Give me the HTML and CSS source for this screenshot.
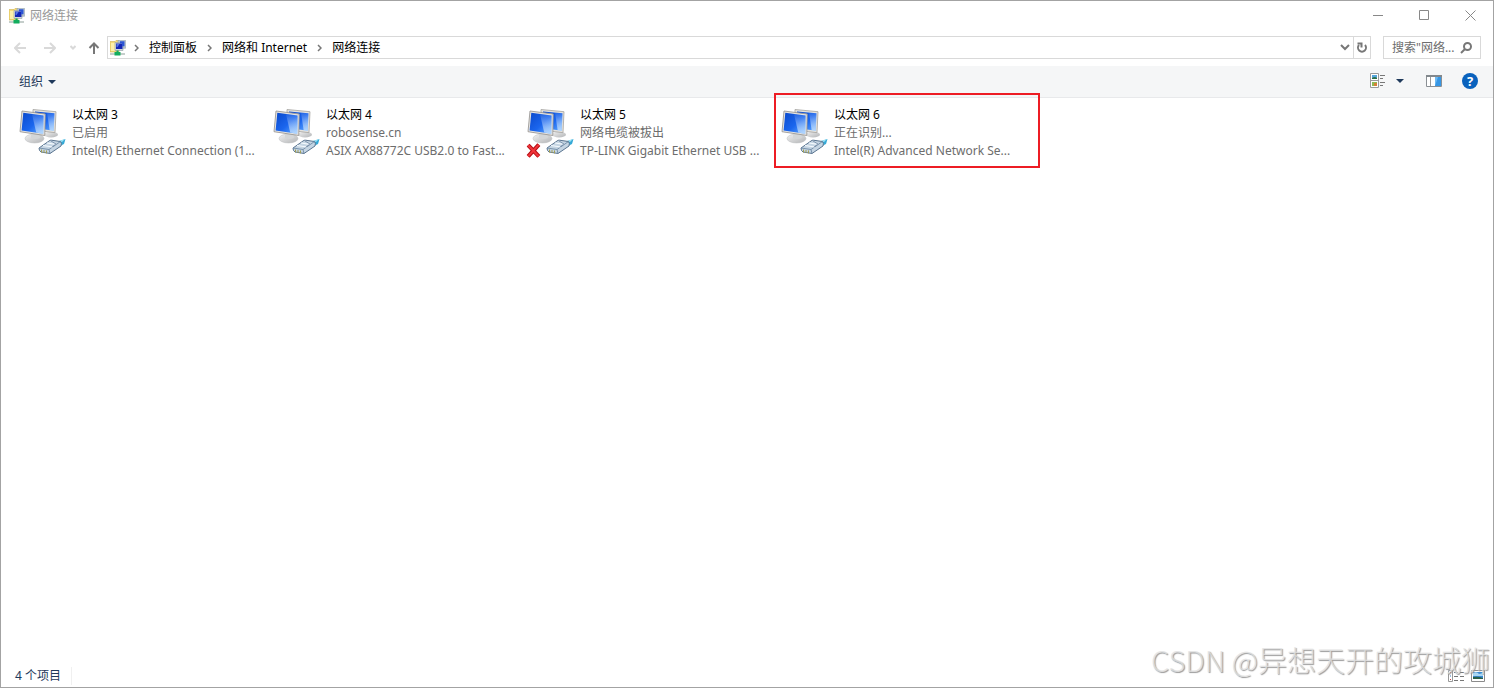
FILE: index.html
```html
<!DOCTYPE html>
<html lang="zh-CN">
  <head>
    <meta charset="UTF-8" />
    <meta name="viewport" content="width=device-width, initial-scale=1.0" />
    <title>网络连接</title>
    <link rel="stylesheet" href="styles.css">
  </head>
  <body>
    <!-- SHARED ICONS -->
    <svg class="sprite" width="0" height="0" aria-hidden="true">
      <defs>
        <linearGradient id="screen" x1="0" y1="0" x2="1" y2="1">
          <stop offset="0" stop-color="#0a49cc" />
          <stop offset="0.55" stop-color="#1b66ee" />
          <stop offset="1" stop-color="#68b0ff" />
        </linearGradient>
        <linearGradient id="shine" x1="0" y1="0" x2="0" y2="1">
          <stop offset="0" stop-color="#fff" stop-opacity="0.05" />
          <stop offset="1" stop-color="#d5ebff" stop-opacity="0.7" />
        </linearGradient>
        <linearGradient id="stand" x1="0" y1="0" x2="1" y2="1">
          <stop offset="0" stop-color="#f2f2f2" />
          <stop offset="1" stop-color="#b2b4b6" />
        </linearGradient>
        <symbol id="adapter" viewBox="0 0 48 48">
          <ellipse cx="33" cy="28.500" rx="7" ry="3" fill="url(#stand)" />
          <path d="M15 3.500l23 2.200-1 21L15 24z" fill="#e4e2de" stroke="#a5a3a0" stroke-width="0.800" />
          <path d="M17 5.500l19.500 1.800-.8 17.500L17 22z" fill="url(#screen)" />
          <path d="M29 6.500l7.500 .8-.8 17.500-4-.4z" fill="url(#shine)" />
          <ellipse cx="16.500" cy="32.500" rx="9.500" ry="4.500" fill="url(#stand)" stroke="#bcbec0" stroke-width="0.500" />
          <path d="M13 26l8 1.500 1 4.500q-5 2-9 0z" fill="#d4d6d7" />
          <path d="M4 5l23.200 3-.4 21.500L2 25.700z" fill="#e6e4e1" stroke="#9b9996" stroke-width="0.900" />
          <path d="M5.300 6.800l20.300 2.700-.4 18.200L3.600 24.500z" fill="url(#screen)" />
          <path d="M14 8l11.600 1.500-.4 18.200-7-1.100z" fill="url(#shine)" />
          <path d="M38 36l9.500-3-1.500 5-6 3z" fill="#35a9d6" />
          <path d="M41 35l6-2-3 3z" fill="#9be2f5" />
          <path d="M21 42l10-7q1-1 2.500-.8l9 1.300q1.500 2 .5 4.500l-11 7.500-9-1.500q-2-1-2-4z" fill="#c5d5e3" stroke="#5b7590" stroke-width="1" />
          <path d="M21 42l10 1.500 11.500-8M31 43.500l1 4" fill="none" stroke="#718ba6" stroke-width="0.900" />
          <path d="M25 39.500l10 1.500M29 37l9 1.300" stroke="#f4f9fd" stroke-width="1.200" />
          <path d="M23.500 43.500v3M26 44v3M28.500 44.400v3" stroke="#a5a056" stroke-width="1" />
          <path d="M33 35l5 3-4 3" fill="none" stroke="#6e86a2" stroke-width="0.800" />
        </symbol>
        <symbol id="network" viewBox="0 0 16 16">
          <path d="M0 1.500h5l1-1h3V12H0z" fill="#f6dc78" stroke="#cfb253" stroke-width="0.600" />
          <path d="M1 3h4v8H1z" fill="#fdf0a9" />
          <path d="M8 .3h7.500v8H8z" fill="#b6c6d2" stroke="#8c9ba5" stroke-width="0.500" />
          <path d="M5 2.500h8v8H5z" fill="#cfd8dd" stroke="#8e9ba3" stroke-width="0.600" />
          <path d="M6 3.500h6.500v5.500H6z" fill="#1426b4" />
          <path d="M10 1.200h4.500v5H12V3.500h-2z" fill="#2c55d4" />
          <path d="M6.500 4h3l-2 3h-1z" fill="#5676e8" />
          <path d="M0 13h15v2H0z" fill="#c5cecb" />
          <path d="M6.500 10.500h2V12h2v3.500h-6V12h2z" fill="#12ad5d" />
        </symbol>
      </defs>
    </svg>

    <main class="window">
      <!-- TITLE BAR -->
      <header class="title-bar">
        <svg class="icon-small" aria-hidden="true"><use href="#network" /></svg>
        <h1>网络连接</h1>
        <div class="window-buttons">
          <button type="button" aria-label="最小化">
            <svg width="11" height="11" viewBox="0 0 11 11"><path d="M0 5.500h10" /></svg>
          </button>
          <button type="button" aria-label="最大化">
            <svg width="11" height="11" viewBox="0 0 11 11"><path d="M.5.500h9v9h-9z" /></svg>
          </button>
          <button type="button" aria-label="关闭">
            <svg width="11" height="11" viewBox="0 0 11 11"><path d="M.5.500l10 10M10.500.500l-10 10" /></svg>
          </button>
        </div>
      </header>

      <!-- NAVIGATION -->
      <nav class="nav-bar">
        <div class="nav-buttons">
          <button type="button" class="faded" aria-label="后退">
            <svg width="12" height="12" viewBox="0 0 12 12"><path d="M12 6H1M6 1L1 6l5 5" /></svg>
          </button>
          <button type="button" class="faded" aria-label="前进">
            <svg width="12" height="12" viewBox="0 0 12 12"><path d="M0 6h11M6 1l5 5-5 5" /></svg>
          </button>
          <button type="button" class="faded recent" aria-label="最近浏览的位置">
            <svg width="6" height="5" viewBox="0 0 6 5"><path d="M.5 1L3 3.500 5.500 1" /></svg>
          </button>
          <button type="button" class="up" aria-label="上移">
            <svg width="12" height="12" viewBox="0 0 12 12"><path d="M6 12V1.500M1.500 6L6 1.500 10.500 6" /></svg>
          </button>
        </div>
        <div class="address">
          <svg class="icon-small" aria-hidden="true"><use href="#network" /></svg>
          <svg class="chevron" viewBox="0 0 5 8" aria-hidden="true"><path d="M1 1l3 3-3 3" /></svg>
          <a href="#">控制面板</a>
          <svg class="chevron" viewBox="0 0 5 8" aria-hidden="true"><path d="M1 1l3 3-3 3" /></svg>
          <a href="#">网络和 Internet</a>
          <svg class="chevron" viewBox="0 0 5 8" aria-hidden="true"><path d="M1 1l3 3-3 3" /></svg>
          <a href="#">网络连接</a>
          <button type="button" class="history" aria-label="以前的位置">
            <svg width="10" height="7" viewBox="0 0 10 7"><path d="M1 1l4 4 4-4" /></svg>
          </button>
          <button type="button" class="refresh" aria-label="刷新">
            <svg width="12" height="12" viewBox="0 0 12 12"><path d="M3 3A4 4 0 1 0 9 3" /><path d="M1.500 1.500H5.500V5.500" /></svg>
          </button>
        </div>
        <div class="search">
          <input type="text" aria-label="搜索" placeholder='搜索"网络...' />
          <svg width="12" height="12" viewBox="0 0 12 12" aria-hidden="true"><circle cx="7.500" cy="4.500" r="3.500" /><path d="M5 7L1 11" /></svg>
        </div>
      </nav>

      <!-- COMMAND BAR -->
      <div class="command-bar">
        <button type="button" class="organize">组织 <span class="caret"></span></button>
        <div class="view-buttons">
          <button type="button" class="view-mode" aria-label="更改视图">
            <svg width="16" height="16" viewBox="0 0 16 16">
              <path d="M.5.500h8v14h-8zM.5 7.500h8" fill="#fff" stroke="#9a9a9a" />
              <path d="M2 2h5v4H2z" fill="#55a5dc" /><path d="M2 5q3-2 5 0v1H2z" fill="#2f7048" />
              <path d="M2 9h5v4H2z" fill="#8dba55" /><path d="M4 10h3v3H4z" fill="#d78038" />
              <path d="M10 2.500h5M10 5.500h3M10 9.500h5M10 12.500h3" stroke="#777" />
            </svg>
          </button>
          <button type="button" class="view-more" aria-label="更多选项"><span class="caret"></span></button>
          <button type="button" class="preview" aria-label="显示预览窗格">
            <svg width="16" height="12" viewBox="0 0 16 12">
              <path d="M.5.500h15v11H.5z" fill="#fff" stroke="#8a8f94" />
              <path d="M0 0h16v2H0z" fill="#82888d" />
              <path d="M4.500 2v9" stroke="#999" />
              <path d="M9 2h6v9H9z" fill="#3796e4" />
              <path d="M9 2h3l-3 9z" fill="#6ebaf3" />
            </svg>
          </button>
          <button type="button" class="help" aria-label="获取帮助">?</button>
        </div>
      </div>

      <!-- ADAPTERS -->
      <ul class="adapters">
        <li class="adapter">
          <svg class="adapter-icon" aria-hidden="true"><use href="#adapter" /></svg>
          <div class="details">
            <h2>以太网 3</h2>
            <p>已启用</p>
            <p>Intel(R) Ethernet Connection (1...</p>
          </div>
        </li>
        <li class="adapter">
          <svg class="adapter-icon" aria-hidden="true"><use href="#adapter" /></svg>
          <div class="details">
            <h2>以太网 4</h2>
            <p>robosense.cn</p>
            <p>ASIX AX88772C USB2.0 to Fast...</p>
          </div>
        </li>
        <li class="adapter">
          <svg class="adapter-icon" aria-hidden="true"><use href="#adapter" /></svg>
          <svg class="unplugged" viewBox="0 0 14 14" role="img" aria-label="未连接">
            <path d="M2 2l10 10.500M12 1.500l-10 11" stroke="#b40d14" stroke-width="3.800" />
            <path d="M2 2l10 10.500M12 1.500l-10 11" stroke="#f0353a" stroke-width="2" />
          </svg>
          <div class="details">
            <h2>以太网 5</h2>
            <p>网络电缆被拔出</p>
            <p>TP-LINK Gigabit Ethernet USB ...</p>
          </div>
        </li>
        <li class="adapter marked">
          <svg class="adapter-icon" aria-hidden="true"><use href="#adapter" /></svg>
          <div class="details">
            <h2>以太网 6</h2>
            <p>正在识别...</p>
            <p>Intel(R) Advanced Network Se...</p>
          </div>
        </li>
      </ul>

      <!-- STATUS BAR -->
      <footer class="status-bar">
        <span class="count">4 个项目</span>
        <div class="layout-buttons">
          <button type="button" aria-label="详细信息">
            <svg width="16" height="12" viewBox="0 0 16 12">
              <path d="M.5.500h4v11h-4z" fill="#fff" stroke="#999" />
              <path d="M2 2h1v1H2zM2 9h1v1H2z" fill="#c54848" /><path d="M2 5.500h1v1H2z" fill="#3f7dbd" />
              <path d="M6 2.500h4M12 2.500h4M6 6.500h4M12 6.500h4M6 10.500h4M12 10.500h4" stroke="#777" />
            </svg>
          </button>
          <button type="button" aria-label="大缩略图">
            <svg width="14" height="12" viewBox="0 0 14 12">
              <path d="M.5.500h13v11H.5z" fill="#fff" stroke="#8b8b8b" />
              <path d="M2 2h10v7H2z" fill="#3b8ad2" />
              <path d="M2 3q4-2 6 1l4-1v3H2z" fill="#a8d5f2" />
              <path d="M2 7q5-1 10 1v1H2z" fill="#28604a" />
            </svg>
          </button>
        </div>
      </footer>
      <div class="watermark">CSDN @异想天开的攻城狮</div>
    </main>
  </body>
</html>
```

FILE: styles.css
```css
* {
  box-sizing: border-box;
}
body {
  margin: 0;
  font-family: "Noto Sans", "Noto Sans CJK SC", sans-serif;
  font-size: 12px;
  line-height: 18px;
  color: #000;
  background: #fff;
}
h1,
h2,
p,
ul {
  margin: 0;
  padding: 0;
  font-size: inherit;
  font-weight: normal;
}
a {
  color: inherit;
  text-decoration: none;
}
button {
  display: flex;
  align-items: center;
  justify-content: center;
  padding: 0;
  border: none;
  background: none;
  font: inherit;
  color: inherit;
}
svg {
  flex: none;
  fill: none;
}
.sprite {
  position: absolute;
}
.icon-small {
  width: 16px;
  height: 16px;
}

/* WINDOW */
.window {
  position: relative;
  display: flex;
  flex-direction: column;
  min-height: 100vh;
  border: 1px solid #a3a3a3;
}

/* TITLE BAR */
.title-bar {
  display: flex;
  align-items: center;
  height: 29px;
  padding-left: 8px;
}
.title-bar h1 {
  margin-left: 5px;
  color: #999;
}
.window-buttons {
  display: flex;
  margin-left: auto;
}
.window-buttons button {
  width: 46px;
  height: 29px;
}
.window-buttons path {
  stroke: #888;
}

/* NAVIGATION */
.nav-bar {
  display: flex;
  align-items: center;
  height: 36px;
  padding: 0 12px 1px 7px;
}
.nav-bar svg path,
.nav-bar svg circle {
  stroke: #777;
  stroke-width: 2;
}
.nav-buttons {
  display: flex;
  margin-right: 3px;
}
.nav-buttons button {
  width: 24px;
  height: 22px;
}
.nav-buttons button + button {
  margin-left: 6px;
}
.nav-buttons .recent {
  width: 10px;
}
.nav-buttons .recent + .up {
  width: 20px;
}
.nav-buttons .faded path {
  stroke: #d9d9d9;
}
.address {
  display: flex;
  flex: 1;
  align-items: center;
  height: 23px;
  padding-left: 2px;
  border: 1px solid #d9d9d9;
}
.nav-bar .icon-small {
  stroke: none;
}
.address .chevron {
  width: 5px;
  height: 8px;
  margin: 0 10px 0 8px;
}
.nav-bar .chevron path {
  stroke-width: 1.5;
}
.address a + .chevron {
  margin-left: 10px;
}
.history {
  width: 16px;
  margin-left: auto;
}
.refresh {
  align-self: stretch;
  width: 17px;
  border-left: 1px solid #d9d9d9;
}
.search {
  display: flex;
  align-items: center;
  width: 98px;
  height: 23px;
  margin-left: 12px;
  padding: 0 8px;
  border: 1px solid #d9d9d9;
}
.search input {
  flex: 1;
  min-width: 0;
  padding: 0;
  border: none;
  outline: none;
  background: none;
  font: inherit;
}
.search input::placeholder {
  color: #6d6d6d;
}

/* COMMAND BAR */
.command-bar {
  display: flex;
  align-items: center;
  justify-content: space-between;
  height: 32px;
  padding: 0 15px 0 18px;
  background: #f5f6f7;
  border-bottom: 1px solid #e8e9eb;
  color: #1e395b;
}
.caret {
  border: 4px solid transparent;
  border-top-color: #1e395b;
  border-bottom: none;
}
.organize {
  gap: 5px;
}
.view-buttons {
  display: flex;
  align-items: center;
  padding-bottom: 1px;
}
.view-more {
  width: 28px;
}
.preview {
  margin: 0 20px 0 12px;
}
.help {
  width: 16px;
  height: 16px;
  border-radius: 50%;
  background: #0a62bd;
  color: #fff;
  font-size: 13px;
  font-weight: bold;
}

/* ADAPTERS */
.adapters {
  display: grid;
  grid-template-columns: repeat(auto-fill, 254px);
  flex: 1;
  align-content: start;
  padding: 8px 16px;
  list-style: none;
}
.adapter {
  position: relative;
  display: flex;
  gap: 6px;
  padding-left: 1px;
}
.adapter-icon {
  width: 48px;
  height: 48px;
}
.details {
  min-width: 0;
  white-space: nowrap;
}
.details p {
  color: #6d6d6d;
}
.unplugged {
  position: absolute;
  left: 1px;
  bottom: 2px;
  width: 15px;
  height: 15px;
}
.marked::after {
  content: "";
  position: absolute;
  inset: -13px -7px -8px -5px;
  border: 2px solid #ed1c24;
}

/* STATUS BAR */
.status-bar {
  display: flex;
  align-items: center;
  justify-content: space-between;
  height: 23px;
  padding: 0 8px 0 14px;
  color: #1e395b;
}
.count {
  padding-right: 10px;
  border-right: 1px solid #f0f0f0;
}
.layout-buttons {
  display: flex;
  gap: 7px;
}
.watermark {
  position: absolute;
  right: 3px;
  bottom: 8px;
  font-family: "Noto Sans CJK SC", sans-serif;
  font-size: 29px;
  font-weight: 300;
  line-height: 40px;
  color: rgba(226, 226, 226, 0.8);
  text-shadow: 1px 1px 1px #999;
  pointer-events: none;
}
```
